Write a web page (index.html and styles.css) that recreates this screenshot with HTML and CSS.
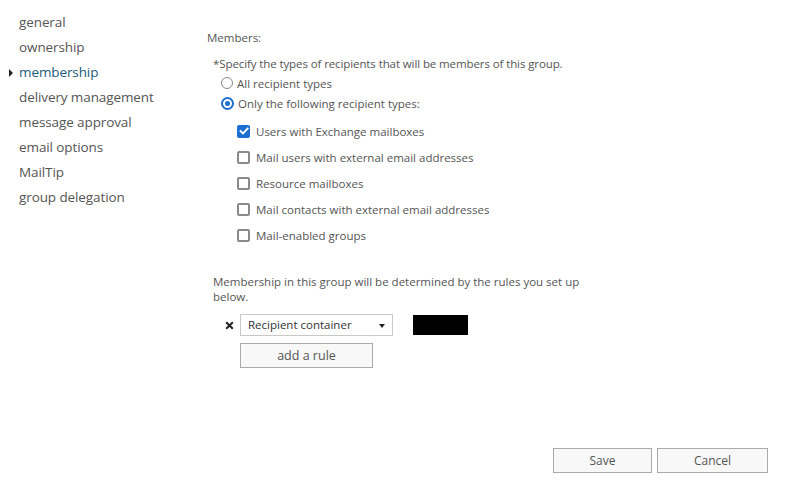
FILE: index.html
```html
<!DOCTYPE html>
<html>
<head>
<meta charset="utf-8">
<link rel="stylesheet" href="styles.css">
</head>
<body>
<div class="page">
  <div class="top">
    <nav class="nav">
      <div class="nav-item">general</div>
      <div class="nav-item">ownership</div>
      <div class="nav-item active"><span class="arrow"></span>membership</div>
      <div class="nav-item">delivery management</div>
      <div class="nav-item">message approval</div>
      <div class="nav-item">email options</div>
      <div class="nav-item">MailTip</div>
      <div class="nav-item">group delegation</div>
    </nav>
    <main class="main">
      <div class="label">Members:</div>
      <div class="section">
        <div class="hint">*Specify the types of recipients that will be members of this group.</div>
        <div class="radios">
          <label class="radio"><span class="radio-box"></span>All recipient types</label>
          <label class="radio"><span class="radio-box on"></span>Only the following recipient types:</label>
        </div>
        <div class="checks">
          <label class="check"><span class="check-box on"><svg viewBox="0 0 12 12" width="12" height="12"><path d="M2.6 6.2 L5 8.5 L9.6 3.6" fill="none" stroke="#fff" stroke-width="1.9" stroke-linecap="square"/></svg></span>Users with Exchange mailboxes</label>
          <label class="check"><span class="check-box"></span>Mail users with external email addresses</label>
          <label class="check"><span class="check-box"></span>Resource mailboxes</label>
          <label class="check"><span class="check-box"></span>Mail contacts with external email addresses</label>
          <label class="check"><span class="check-box"></span>Mail-enabled groups</label>
        </div>
        <p class="rules-text">Membership in this group will be determined by the rules you set up below.</p>
        <div class="rule-row">
          <span class="remove"><svg viewBox="0 0 9 9" width="9" height="9"><path d="M1.2 1.2 L7.8 7.8 M7.8 1.2 L1.2 7.8" stroke="#222" stroke-width="2"/></svg></span>
          <div class="select">Recipient container<span class="caret"></span></div>
          <div class="redacted"></div>
        </div>
        <div class="add-row"><button class="btn add">add a rule</button></div>
      </div>
    </main>
  </div>
  <footer class="footer">
    <button class="btn save">Save</button>
    <button class="btn cancel">Cancel</button>
  </footer>
</div>
</body>
</html>
```
FILE: styles.css
```css
html, body {
  margin: 0;
  padding: 0;
  background: #fff;
}
body {
  font-family: "Open Sans", "Noto Sans", sans-serif;
  color: #333;
}
.page {
  width: 788px;
  height: 488px;
  display: flex;
  flex-direction: column;
}
.top {
  display: flex;
  flex: 1;
}
.nav {
  width: 207px;
  flex: none;
  padding-top: 10px;
  box-sizing: border-box;
}
.nav-item {
  position: relative;
  padding-left: 19px;
  height: 25px;
  line-height: 25px;
  font-size: 13.5px;
  color: #555;
  letter-spacing: -0.1px;
}
.nav-item.active {
  color: #1b5a79;
}
.arrow {
  position: absolute;
  left: 9px;
  top: 9px;
  width: 0;
  height: 0;
  border-top: 4px solid transparent;
  border-bottom: 4px solid transparent;
  border-left: 4px solid #222;
}
.main {
  flex: 1;
  padding-top: 30px;
  font-size: 11.5px;
  color: #555;
}
.label {
  line-height: 16px;
}
.section {
  padding-left: 6px;
  padding-top: 10px;
}
.hint {
  line-height: 16px;
  letter-spacing: -0.1px;
}
.radios {
  padding-left: 8px;
  padding-top: 1px;
}
.radio {
  display: flex;
  align-items: center;
  height: 20px;
}
.radio-box {
  width: 10px;
  height: 10px;
  border: 1.5px solid #888;
  border-radius: 50%;
  margin-right: 4px;
  position: relative;
  flex: none;
}
.radio-box.on {
  border-color: #1a6fd0;
  border-width: 2px;
  width: 9px;
  height: 9px;
}
.radio-box.on::after {
  content: "";
  position: absolute;
  left: 2px;
  top: 2px;
  width: 5px;
  height: 5px;
  border-radius: 50%;
  background: #1a6fd0;
}
.checks {
  padding-left: 24px;
  padding-top: 5px;
}
.check {
  display: flex;
  align-items: center;
  height: 26px;
}
.check-box {
  width: 9px;
  height: 9px;
  border: 2px solid #8a8a8a;
  border-radius: 2px;
  margin-right: 6px;
  flex: none;
  display: flex;
  align-items: center;
  justify-content: center;
}
.check-box.on {
  background: #1a6fd0;
  border-color: #1a6fd0;
}
.check-box svg {
  flex: none;
}
.rules-text {
  margin: 26px 0 0 0;
  width: 385px;
  line-height: 15px;
}
.rule-row {
  display: flex;
  align-items: center;
  margin-top: 10px;
  padding-left: 12px;
}
.remove {
  width: 9px;
  height: 9px;
  display: flex;
  margin-right: 6px;
}
.select {
  position: relative;
  height: 20px;
  border: 1px solid #c8c8c8;
  line-height: 20px;
  padding-left: 7px;
  box-sizing: content-box;
  width: 144px;
  color: #333;
}
.caret {
  position: absolute;
  right: 7px;
  top: 9px;
  width: 0;
  height: 0;
  border-left: 3.5px solid transparent;
  border-right: 3.5px solid transparent;
  border-top: 4px solid #222;
}
.redacted {
  width: 55px;
  height: 20px;
  background: #000;
  margin-left: 20px;
}
.add-row {
  padding-left: 27px;
  margin-top: 7px;
}
.btn {
  font-family: "Open Sans", "Noto Sans", sans-serif;
  font-size: 12px;
  color: #555;
  background: #f8f8f8;
  border: 1px solid #aaa;
  height: 25px;
  padding: 0;
  margin: 0;
}
.add {
  width: 133px;
  font-size: 12.5px;
}
.footer {
  display: flex;
  justify-content: flex-end;
  gap: 5px;
  padding-right: 20px;
  padding-bottom: 15px;
}
.save {
  width: 99px;
}
.cancel {
  width: 111px;
}
```
